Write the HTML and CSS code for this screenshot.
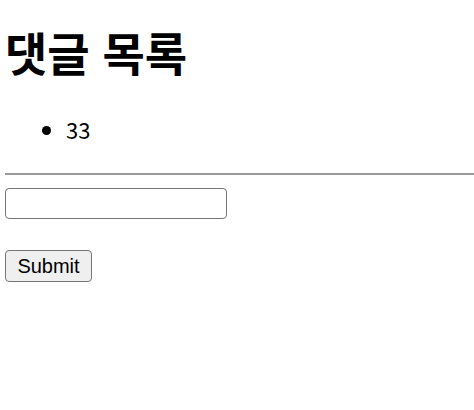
FILE: index.html
```html
<!DOCTYPE html>
<html lang="ko">
<head>
<meta charset="utf-8">
<link rel="stylesheet" href="styles.css">
</head>
<body>
<h1 class="title">댓글 목록</h1>
<ul class="list">
<li>33</li>
</ul>
<hr class="rule">
<form class="form">
<input class="field" type="text">
<button class="btn" type="button">Submit</button>
</form>
</body>
</html>
```
FILE: styles.css
```css
html, body {
  margin: 0;
  padding: 0;
  background: #fff;
}
body {
  padding-left: 5px;
  font-family: "Noto Sans CJK KR", "Noto Sans", sans-serif;
  color: #000;
}
.title {
  margin: 0;
  padding-top: 18px;
  font-size: 46px;
  line-height: 66px;
  font-weight: 700;
}
.list {
  margin: 30px 0 0 0;
  padding-left: 61px;
  font-family: "Noto Sans CJK KR", "Noto Sans", sans-serif;
  font-size: 22px;
  line-height: 30px;
}
.rule {
  margin: 29px 0 0 0;
  border: 0;
  border-top: 2px solid #9a9a9a;
  height: 0;
}
.form {
  display: flex;
  flex-direction: column;
  align-items: flex-start;
  gap: 31px;
  margin-top: 13px;
}
.field {
  box-sizing: border-box;
  width: 222px;
  height: 31px;
  margin: 0;
  border: 1.5px solid #767676;
  border-radius: 4px;
  background: #fff;
}
.btn {
  box-sizing: border-box;
  width: 87px;
  height: 32px;
  margin: 0;
  padding: 0;
  font-family: "Liberation Sans", Arial, sans-serif;
  font-size: 20px;
  color: #000;
  background: #efefef;
  border: 1.5px solid #767676;
  border-radius: 4px;
}
```
